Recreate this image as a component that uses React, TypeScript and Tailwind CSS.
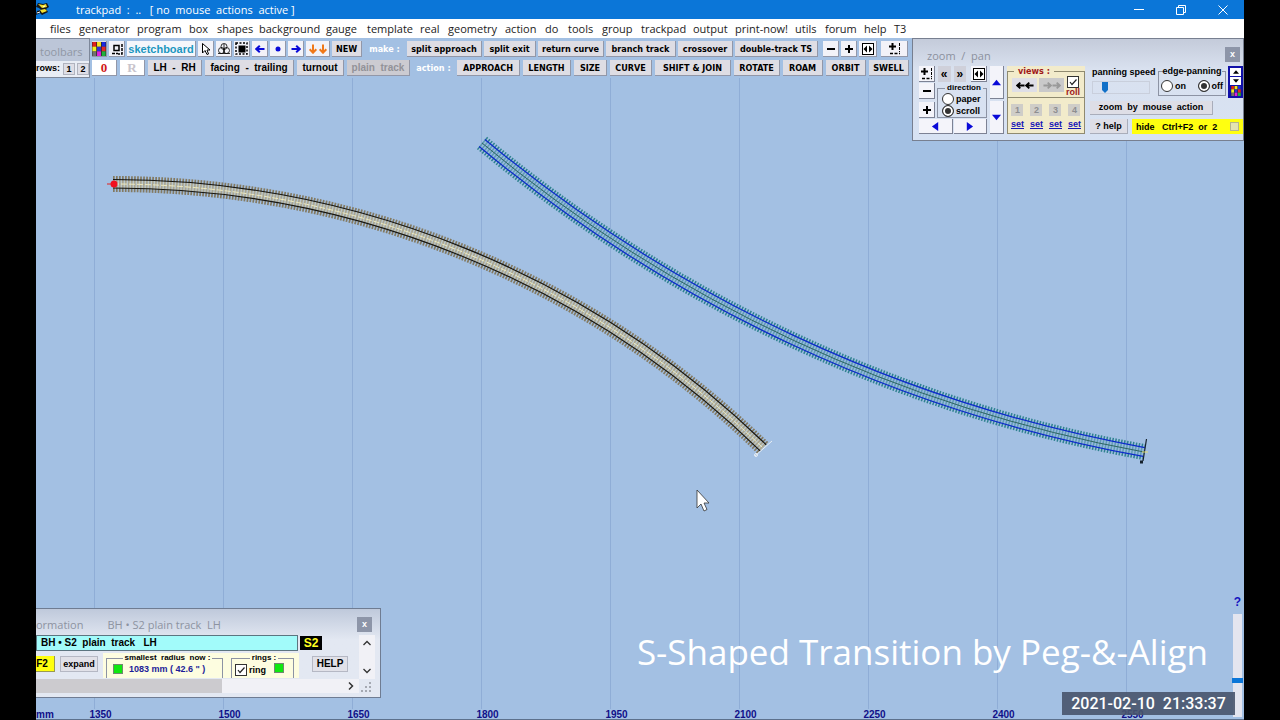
import type { ReactNode } from "react";

const menu: [string, string][] = [
  ["files", "w-[29px]"], ["generator", "w-[58px]"], ["program", "w-[52px]"], ["box", "w-[28px]"],
  ["shapes", "w-[42px]"], ["background", "w-[67px]"], ["gauge", "w-[41px]"], ["template", "w-[53px]"],
  ["real", "w-[28px]"], ["geometry", "w-[57px]"], ["action", "w-[40px]"], ["do", "w-[23px]"],
  ["tools", "w-[34px]"], ["group", "w-[39px]"], ["trackpad", "w-[52px]"], ["output", "w-[42px]"],
  ["print-now!", "w-[60px]"], ["utils", "w-[30px]"], ["forum", "w-[39px]"], ["help", "w-[30px]"], ["T3", "w-5"],
];

const makeButtons: [string, string][] = [
  ["split approach", "w-[75px]"], ["split exit", "w-[52px]"], ["return curve", "w-[66px]"],
  ["branch track", "w-[70px]"], ["crossover", "w-[55px]"], ["double-track TS", "w-[83px]"],
];

const actionButtons: [string, string][] = [
  ["APPROACH", "w-[63px]"], ["LENGTH", "w-[48px]"], ["SIZE", "w-[33px]"], ["CURVE", "w-[42px]"],
  ["SHIFT & JOIN", "w-[76px]"], ["ROTATE", "w-[46px]"], ["ROAM", "w-10"], ["ORBIT", "w-10"], ["SWELL", "w-10"],
];

const rulerMarks = [1350, 1500, 1650, 1800, 1950, 2100, 2250, 2400, 2550];

const SANS = "font-['Open_Sans','Noto_Sans',sans-serif]";
const ARIAL = "font-['Liberation_Sans',sans-serif]";
const VERDANA = "font-['DejaVu_Sans_Condensed','DejaVu_Sans',sans-serif]";

const tones = {
  grey: "bg-[#dedde4] text-black",
  light: "bg-[#f2f2f8] text-black",
  sky: "bg-[#f4f6fb] text-[#1c96bf]",
  red: "bg-white text-[#d01818]",
  faint: "bg-white text-[#c8c4cc]",
  off: "bg-[#cccbd1] text-[#929298]",
};

function Tool({ w, children, label, tone = "grey", className = "" }: { w: string; children: ReactNode; label?: string; tone?: keyof typeof tones; className?: string }) {
  return (
    <button
      type="button"
      aria-label={label}
      className={`flex h-4 shrink-0 items-center justify-center whitespace-nowrap border-r border-b border-[#9297a8] font-bold ${tones[tone]} ${w} ${className}`}
    >
      {children}
    </button>
  );
}

function Arrow({ dir, color = "#0a0ad8", size = 10 }: { dir: "left" | "right" | "down"; color?: string; size?: number }) {
  const turn = { left: 180, right: 0, down: 90 }[dir];
  return (
    <svg width={size} height={size} viewBox="0 0 10 10">
      <path transform={`rotate(${turn} 5 5)`} d="M0.5 5H8.5M5.2 1.7 8.7 5 5.2 8.3" fill="none" stroke={color} strokeWidth="2" />
    </svg>
  );
}

function Triangle({ d, color = "#0a0ad8", size = 9 }: { d: string; color?: string; size?: number }) {
  return (
    <svg width={size} height={size} viewBox="0 0 10 10">
      <path d={d} fill={color} />
    </svg>
  );
}

function SignIcon({ plus }: { plus?: boolean }) {
  return (
    <svg width="10" height="10" viewBox="0 0 10 10" stroke="#000" strokeWidth="2">
      <path d={plus ? "M1 5H9M5 1V9" : "M1 5H9"} />
    </svg>
  );
}

function Palette({ size = 14 }: { size?: number }) {
  const fills = ["#e02020", "#f5e420", "#1a2ae0", "#f0f020", "#3030d0", "#e02828", "#707070", "#e020e0", "#20b040"];
  return (
    <svg width={size} height={size} viewBox="0 0 15 15">
      <rect width="15" height="15" fill="#222" />
      {fills.map((f, i) => (
        <rect key={i} x={(i % 3) * 5 + 0.4} y={Math.floor(i / 3) * 5} width="4.2" height={i > 5 ? 5 : 5.2} fill={f} />
      ))}
    </svg>
  );
}

function FitIcon() {
  return (
    <svg width="12" height="12" viewBox="0 0 12 12">
      <rect x="0.5" y="0.5" width="11" height="11" fill="#fff" stroke="#000" />
      <path d="M5 2.5V9.500L1.500 6ZM7 2.500V9.500L10.500 6Z" />
    </svg>
  );
}

function PlusBox() {
  return (
    <svg width="13" height="13" viewBox="0 0 13 13" fill="none" stroke="#000">
      <path d="M1 4.5H8M4.5 1V8" strokeWidth="2" />
      <path d="M2 11.500H12" strokeWidth="1.5" strokeDasharray="3 1.5" />
      <path d="M11.500 1V10" strokeWidth="1" strokeDasharray="3 1" />
    </svg>
  );
}

type Arc = { x1: number; y1: number; x2: number; y2: number; r: number; bend: 1 | -1 };

function arcPath({ x1, y1, x2, y2, r, bend }: Arc, offset: number) {
  const dx = x2 - x1;
  const dy = y2 - y1;
  const chord = Math.hypot(dx, dy);
  const h = Math.sqrt(r * r - (chord * chord) / 4);
  const cx = (x1 + x2) / 2 - (bend * dy * h) / chord;
  const cy = (y1 + y2) / 2 + (bend * dx * h) / chord;
  const k = (r + offset) / r;
  const p = (x: number, y: number) => `${cx + (x - cx) * k} ${cy + (y - cy) * k}`;
  return `M${p(x1, y1)}A${r + offset} ${r + offset} 0 0 ${bend === 1 ? 1 : 0} ${p(x2, y2)}`;
}

const plainTrack: Arc = { x1: 77, y1: 106, x2: 727, y2: 370, r: 932, bend: 1 };
const shapeTrack: Arc = { x1: 446, y1: 65, x2: 1108, y2: 374, r: 1440, bend: -1 };

function Trackpad() {
  return (
    <svg className="absolute inset-0 h-full w-full" fill="none">
      {rulerMarks.map((m, i) => (
        <path key={m} d={`M${58.5 + i * 129} 0V631`} stroke="#8fadd6" />
      ))}
      <g>
        <path d={arcPath(plainTrack, 0)} stroke="#837a62" strokeWidth="16" strokeDasharray="1.7 1.3" />
        <path d={arcPath(plainTrack, 0)} stroke="#d2cfba" strokeOpacity="0.5" strokeWidth="8" />
        <path d={arcPath(plainTrack, 4.500)} stroke="#151512" strokeWidth="1.2" />
        <path d={arcPath(plainTrack, -4)} stroke="#151512" strokeWidth="1.2" />
        <path d={arcPath(plainTrack, 0)} stroke="#efebc0" strokeDasharray="6 2" />
        <path d="M71 106H78" stroke="#e02020" />
        <circle cx="78" cy="106" r="3.5" fill="#f01020" />
        <path d="M736 363 719 378" stroke="#e8eef4" />
        <circle cx="720" cy="377" r="1.5" stroke="#e8eef4" />
      </g>
      <g>
        <path d={arcPath(shapeTrack, 0)} stroke="#2f8290" strokeWidth="16" strokeDasharray="1.5 1.5" />
        <path d={arcPath(shapeTrack, 0)} stroke="#8fb6da" strokeOpacity="0.5" strokeWidth="9" />
        <path d={arcPath(shapeTrack, 4.500)} stroke="#0c28cc" strokeWidth="1.2" />
        <path d={arcPath(shapeTrack, -4.500)} stroke="#0c28cc" strokeWidth="1.2" />
        <path d={arcPath(shapeTrack, 0)} stroke="#2e6460" />
        <path d="M1110.500 361 1107 383" stroke="#15202c" strokeWidth="1.2" />
        <rect x="1104.500" y="383" width="2" height="2" stroke="#15202c" />
        <path d="M1106 374H1112" stroke="#e8e070" />
      </g>
      <path d="M661 412V430L665 426 668 433 671 431.500 668 425H673Z" fill="#fff" stroke="#333" strokeWidth="0.8" />
    </svg>
  );
}

function Group({ title, className = "", legend = "", children }: { title: string; className?: string; legend?: string; children: ReactNode }) {
  return (
    <fieldset className={`min-w-0 border border-[#8c93a4] ${className}`}>
      <legend className={`mx-auto leading-[10px] font-bold ${legend}`}>{title}</legend>
      {children}
    </fieldset>
  );
}

function Radio({ name, label, checked }: { name: string; label: string; checked?: boolean }) {
  return (
    <label className="flex h-3 items-center gap-0.5 text-[9px] leading-3 font-bold">
      <input
        type="radio"
        name={name}
        defaultChecked={checked}
        className="size-3 shrink-0 appearance-none rounded-full border border-[#333] bg-white checked:bg-[#333] checked:ring-2 checked:ring-white checked:ring-inset"
      />
      {label}
    </label>
  );
}

function Tick({ label, stacked }: { label: string; stacked?: boolean }) {
  return (
    <label className={`flex items-center text-[9px] font-bold ${stacked ? "flex-col leading-[9px] text-[#a01818]" : "gap-0.5 leading-3"}`}>
      <span className="relative size-3">
        <input type="checkbox" defaultChecked className="peer block size-3 appearance-none border border-[#333] bg-white" />
        <svg className="pointer-events-none absolute inset-0 hidden peer-checked:block" width="12" height="12" fill="none" stroke="#222">
          <path d="M3 6 5 8.500 9.500 3.500" strokeWidth="1.2" />
        </svg>
      </span>
      {label}
    </label>
  );
}

function CloseBox() {
  return (
    <button type="button" aria-label="close" className={`flex size-[15px] shrink-0 items-center justify-center bg-[#8d95a8] text-[9px] leading-none font-bold text-white ${ARIAL}`}>
      x
    </button>
  );
}

const raised = "flex items-center justify-center border-r border-b border-[#7d8294] bg-[#f4f4fa]";

function ZoomPanel() {
  return (
    <section className={`absolute top-0 right-0 z-10 w-[332px] border border-[#777f90] bg-linear-to-b from-[#c4cbda] via-[#d9e1ef] via-30% to-[#d7e2f3] pb-1.5 pl-1.5 font-bold ${ARIAL}`}>
      <header className={`flex h-[27px] items-start justify-between pt-2 pr-[3px] pl-2 text-[11px] leading-[18px] font-normal text-[#8c919e] ${SANS}`}>
        <h2 className="whitespace-pre">zoom  /  pan</h2>
        <CloseBox />
      </header>
      <div className="flex h-[68px] items-stretch">
        <div className="flex w-[68px] flex-col gap-px">
          <div className="flex h-4 gap-[3px]">
            <button type="button" aria-label="zoom area" className={`${raised} w-4`}><PlusBox /></button>
            <button type="button" className="w-[13px] bg-[#cfd0da] text-[12px] leading-none">«</button>
            <button type="button" className="w-[13px] bg-[#cfd0da] text-[12px] leading-none">»</button>
            <button type="button" aria-label="zoom fit" className={`${raised} ml-0.5 w-4`}><FitIcon /></button>
          </div>
          <div className="flex h-[35px] gap-0.5">
            <div className="flex w-4 shrink-0 flex-col gap-[3px]">
              <button type="button" aria-label="zoom out" className={`${raised} h-4`}><SignIcon /></button>
              <button type="button" aria-label="zoom in" className={`${raised} h-4`}><SignIcon plus /></button>
            </div>
            <Group title="direction" className="flex-1 pl-1" legend="px-0.5 text-[8px]">
              <Radio name="direction" label="paper" />
              <Radio name="direction" label="scroll" checked />
            </Group>
          </div>
          <div className="flex flex-1 gap-px">
            <button type="button" aria-label="pan left" className={`${raised} flex-1`}><Triangle d="M8 0V10L1 5Z" /></button>
            <button type="button" aria-label="pan right" className={`${raised} flex-1`}><Triangle d="M2 0V10L9 5Z" /></button>
          </div>
        </div>
        <div className="ml-[3px] flex w-[14px] flex-col gap-0.5">
          <button type="button" aria-label="pan up" className={`${raised} flex-1`}><Triangle d="M0 8H10L5 2Z" /></button>
          <button type="button" aria-label="pan down" className={`${raised} flex-1`}><Triangle d="M0 2H10L5 8Z" /></button>
        </div>
        <div className="ml-[3px] flex w-[78px] flex-col bg-[#f2ebcb]">
          <fieldset className="h-8 border border-[#8f8a70] px-1">
            <legend className={`ml-0.5 px-1 text-[9px] leading-[10px] text-[#a01818] ${VERDANA}`}>views :</legend>
            <div className="flex items-start gap-0.5">
              <button type="button" aria-label="previous view" className="mt-0.5 flex h-3.5 w-[25px] items-center justify-center bg-[#dedee6]"><Arrow dir="left" color="#000" size={9} /><Arrow dir="left" color="#000" size={9} /></button>
              <button type="button" aria-label="next view" className="mt-0.5 flex h-3.5 w-[25px] items-center justify-center bg-[#c9c9ca]"><Arrow dir="right" color="#999" size={9} /><Arrow dir="right" color="#999" size={9} /></button>
              <Tick label="roll" stacked />
            </div>
          </fieldset>
          <div className="grid flex-1 grid-cols-4 justify-items-center border border-t-0 border-[#8f8a70] pt-1.5 text-[9px] leading-3">
            {[1, 2, 3, 4].map((n) => (
              <div key={n} className="flex flex-col items-center gap-0.5">
                <button type="button" className="h-3 w-3 bg-[#cfcdc8] text-[#8e8e90]">{n}</button>
                <a href="#views" className="text-[#1616b8] underline">set</a>
              </div>
            ))}
          </div>
        </div>
        <div className="ml-[5px] flex min-w-0 flex-1 flex-col justify-between">
          <div className="flex justify-between">
            <label className="flex w-[63px] flex-col pt-0.5 pl-0.5 text-[9px] leading-3 whitespace-nowrap">
              <span className="leading-[9px]">panning speed</span>
              <span className="relative mt-1 h-[13px] w-[58px] border border-[#c9cfdc]">
                <input type="range" defaultValue={20} className="absolute inset-0 w-full opacity-0" />
                <svg width="56" height="13"><path d="M9 0H15V8L12 11 9 8Z" fill="#1070c8" /></svg>
              </span>
            </label>
            <Group title="edge-panning" className="mr-0.5 h-[30px] w-[68px] shrink-0 px-0.5" legend="whitespace-nowrap text-[9px]">
              <div className="flex justify-between pt-1">
                <Radio name="edge" label="on" />
                <Radio name="edge" label="off" checked />
              </div>
            </Group>
          </div>
          <button type="button" className="h-[14px] w-[123px] border-r border-b border-[#a9adba] bg-[#dedee6] text-[9px] leading-3 whitespace-pre">zoom  by  mouse  action</button>
          <div className="flex h-[15px] gap-1">
            <button type="button" className="w-[38px] border-r border-b border-[#a9adba] bg-[#dedee6] text-[9px] leading-3">? help</button>
            <button type="button" className="flex flex-1 items-center bg-[#ffff10] pl-1 text-[9px] leading-3 whitespace-pre">hide   Ctrl+F2  or  2</button>
          </div>
        </div>
        <div className="flex w-[15px] flex-col justify-between">
          <div className="flex h-8 flex-col items-center gap-px border-2 border-[#1010a8] bg-[#1010a8]">
            <button type="button" aria-label="more" className="flex h-2 w-full items-center justify-center bg-white"><Triangle d="M0 8H10L5 2Z" color="#000" size={6} /></button>
            <button type="button" aria-label="less" className="flex h-2 w-full items-center justify-center bg-white"><Triangle d="M0 2H10L5 8Z" color="#000" size={6} /></button>
            <Palette size={10} />
          </div>
          <div className="flex h-[15px] items-center bg-[#ffff10] pl-0.5"><span className="size-[9px] border border-[#b5b58a] bg-[#e4e4b0]" /></div>
        </div>
      </div>
    </section>
  );
}

function InfoPanel() {
  return (
    <section className={`absolute bottom-[21px] left-0 z-10 w-[345px] border border-l-0 border-[#6f7c92] bg-linear-to-b from-[#bfc9db] to-[#e3e8f2] to-35% pb-1 font-bold ${ARIAL}`}>
      <header className={`flex h-[26px] items-start justify-between pt-2 pr-2 text-[11px] leading-4 font-normal text-[#8d93a1] ${SANS}`}>
        <h2 className="flex gap-6 whitespace-pre"><span>ormation</span><span>BH • S2 plain track  LH</span></h2>
        <CloseBox />
      </header>
      <div className="flex">
        <div className="w-[323px]">
          <div className="flex h-4 items-center gap-0.5">
            <p className="h-4 w-[262px] border border-[#5c7580] bg-[#a2fbfa] pl-1 text-[10px] leading-[14px] whitespace-pre">BH • S2  plain  track   LH</p>
            <strong className="h-[14px] w-[22px] bg-black text-center text-[12px] leading-[14px] text-[#ffff20]">S2</strong>
          </div>
          <div className="flex h-[27px] items-end">
            <button type="button" className="mb-1.5 h-4 w-[19px] border-r border-b border-[#9a9a50] bg-[#ffff10] pr-1.5 text-[10px] leading-3">F2</button>
            <button type="button" className="mb-1.5 ml-[5px] h-4 w-[38px] border border-[#b5b8c4] bg-[#e1e1e8] text-[9px] leading-3">expand</button>
            <div className="ml-[5px] flex h-[25px] w-[196px] gap-2 bg-[#fdfde0] pl-[3px]">
              <Group title="smallest  radius  now :" className="w-[117px] border-b-0 pl-1.5" legend="px-0.5 whitespace-pre text-[8px]">
                <div className="flex items-center gap-1.5 text-[9px] leading-3 whitespace-pre text-[#1c1c98]">
                  <span className="size-[10px] border border-[#708870] bg-[#10e810]" />
                  1083 mm ( 42.6 " )
                </div>
              </Group>
              <Group title="rings :" className="w-[63px] border-b-0 pl-[3px]" legend="px-0.5 text-[8px]">
                <div className="flex items-center gap-2">
                  <Tick label="ring" />
                  <span className="mb-1 size-[10px] border border-[#708870] bg-[#10e810]" />
                </div>
              </Group>
            </div>
            <button type="button" className="mb-1.5 ml-[13px] h-4 w-9 border border-[#b5b8c4] bg-[#e1e1e8] text-[10px] leading-3">HELP</button>
          </div>
          <div className="mt-px flex h-[14px] items-center justify-between bg-[#f1f1f6]">
            <span className="h-full w-[186px] bg-[#cccbcf]" />
            <svg className="mr-1" width="8" height="10" fill="none" stroke="#333" strokeWidth="1.5"><path d="M2 1.500 5.500 5 2 8.500" /></svg>
          </div>
        </div>
        <div className="flex w-4 flex-col">
          <div className="flex flex-1 flex-col items-center justify-between bg-[#f1f1f6] py-1">
            <svg width="10" height="8" fill="none" stroke="#333" strokeWidth="1.3"><path d="M1.500 6 5 2.500 8.500 6" /></svg>
            <svg width="10" height="8" fill="none" stroke="#333" strokeWidth="1.3"><path d="M1.500 2 5 5.500 8.500 2" /></svg>
          </div>
          <svg width="14" height="14" fill="#a5a9b2">
            <path d="M10 3h2v2h-2zM10 7h2v2h-2zM10 11h2v2h-2zM6 7h2v2H6zM6 11h2v2H6zM2 11h2v2H2z" />
          </svg>
        </div>
      </div>
    </section>
  );
}

export default function App() {
  return (
    <div className="flex h-screen bg-black px-9">
      <main className="relative flex min-w-0 flex-1 flex-col overflow-hidden border-b border-[#5c708c] bg-[#a3c0e3]">
        <header className={`flex h-[19px] shrink-0 items-center bg-[#0b76d8] text-white ${SANS}`}>
          <svg width="15" height="17" viewBox="0 0 15 17">
            <path d="M2 2 7 3 11 2 13 6 10 8 12 11 6 14 4 12 0 14 1 10 5 9 3 7 0 6Z" fill="#161616" />
            <path d="M2 3 7 4 10 3 11 6 6 7ZM4 9 9 8 11 10 6 12Z" fill="#f2e030" />
            <path d="M1 12 4 11M7 6 9 5" stroke="#fff" />
          </svg>
          <h1 className="ml-[25px] flex-1 text-[11px] leading-4 whitespace-pre">trackpad  :  ..   [ no  mouse  actions  active ]</h1>
          <div className="flex gap-8 pr-4">
            <button type="button" aria-label="minimise"><svg width="10" height="10" stroke="#fff"><path d="M0 4.500H10" /></svg></button>
            <button type="button" aria-label="restore"><svg width="10" height="10" fill="none" stroke="#fff"><path d="M0.500 2.500H7.500V9.500H0.500ZM2.500 2V0.500H9.500V7.500H8" /></svg></button>
            <button type="button" aria-label="close"><svg width="10" height="10" stroke="#fff"><path d="M0.500 0.500 9.500 9.500M9.500 0.500 0.500 9.500" /></svg></button>
          </div>
        </header>
        <nav className={`flex h-[19px] shrink-0 items-center bg-white pl-[14px] text-[11px] leading-4 text-[#222] ${SANS}`}>
          {menu.map(([name, w]) => (
            <button type="button" key={name} className={`shrink-0 text-left whitespace-nowrap ${w}`}>{name}</button>
          ))}
        </nav>

        <div className="relative flex min-h-0 flex-1 flex-col">
          <div className="flex h-10 shrink-0">
            <section className="w-[54px] shrink-0 border border-l-0 border-[#7d8799] bg-[#e9edf5]">
              <h2 className={`h-[22px] bg-[#bcc6d8] pt-1 pl-1 text-[11px] leading-[18px] text-[#9097a5] ${SANS}`}>toolbars</h2>
              <div className={`flex h-4 items-center gap-0.5 text-[9px] font-bold ${ARIAL}`}>
                <span className="w-[25px]">rows:</span>
                <button type="button" className="h-3 w-3 border border-[#b0b3be] bg-[#dedee6] leading-[10px]">1</button>
                <button type="button" className="h-3 w-3 border border-[#b0b3be] bg-[#dedee6] leading-[10px]">2</button>
              </div>
            </section>
            <div className={`flex flex-col gap-[3px] pt-[3px] pl-0.5 text-[9px] leading-3 ${VERDANA}`}>
              <div className="flex gap-0.5">
                <Tool w="w-[15px]" label="colours"><Palette /></Tool>
                <Tool w="w-[16px]" label="copy area" tone="light">
                  <svg width="12" height="12" fill="none" stroke="#000"><path d="M3 2.500H8V7.500H3Z" strokeWidth="1.5" /><path d="M1 10.500H7M11 1V11H7" strokeWidth="1.5" strokeDasharray="3 1" /></svg>
                </Tool>
                <Tool w="w-[69px]" tone="sky" className={`text-[11px] ${ARIAL}`}>sketchboard</Tool>
                <Tool w="w-4" label="pointer" tone="light">
                  <svg width="12" height="14" fill="#fff" stroke="#000"><path d="M2.500 1.500V11L5 8.500 7 12.500 8.500 12 7 8H10Z" /></svg>
                </Tool>
                <Tool w="w-4" label="shapes" tone="light">
                  <svg width="14" height="14" fill="none" stroke="#000" strokeWidth="0.8"><circle cx="7" cy="4.500" r="3" /><circle cx="4.500" cy="8.500" r="3" /><circle cx="9.500" cy="8.500" r="3" /><path d="M1 11.500H13M7 2V11" /></svg>
                </Tool>
                <Tool w="w-4" label="group" tone="light">
                  <svg width="14" height="14" fill="none" stroke="#000"><rect x="1" y="1" width="11" height="11" strokeWidth="1.5" strokeDasharray="2 1.500" /><rect x="4" y="4" width="6" height="6" fill="#000" /></svg>
                </Tool>
                <Tool w="w-4" label="previous" tone="light"><Arrow dir="left" /></Tool>
                <Tool w="w-4" label="current" tone="light"><svg width="6" height="6"><circle cx="3" cy="3" r="2.500" fill="#0a0ad8" /></svg></Tool>
                <Tool w="w-4" label="next" tone="light"><Arrow dir="right" /></Tool>
                <Tool w="w-6" label="store" tone="light"><Arrow dir="down" color="#f07818" /><Arrow dir="down" color="#f07818" /></Tool>
                <Tool w="w-[30px]">NEW</Tool>
                <span className="w-[41px] py-0.5 text-center font-bold whitespace-nowrap text-white">make :</span>
                {makeButtons.map(([name, w]) => <Tool key={name} w={w}>{name}</Tool>)}
                <Tool w="w-4" label="zoom out" tone="light" className="ml-[3px]"><SignIcon /></Tool>
                <Tool w="w-4" label="zoom in" tone="light"><SignIcon plus /></Tool>
                <Tool w="w-[18px]" label="fit" tone="light"><FitIcon /></Tool>
                <Tool w="w-[27px]" label="zoom area" tone="light" className="ml-0.5"><PlusBox /></Tool>
              </div>
              <div className="flex gap-[3px]">
                <Tool w="w-[25px]" tone="red" className="font-['Liberation_Serif',serif] text-[13px]">0</Tool>
                <Tool w="w-[25px]" tone="faint" className="font-['Liberation_Serif',serif] text-[13px]">R</Tool>
                <Tool w="w-[54px]" className={`text-[10px] whitespace-pre ${ARIAL}`}>LH  -  RH</Tool>
                <Tool w="w-[89px]" className={`text-[10px] whitespace-pre ${ARIAL}`}>facing  -  trailing</Tool>
                <Tool w="w-[47px]" className={`text-[10px] ${ARIAL}`}>turnout</Tool>
                <Tool w="w-[63px]" tone="off" className={`text-[10px] whitespace-pre ${ARIAL}`}>plain  track</Tool>
                <span className="w-[41px] py-0.5 text-center font-bold whitespace-nowrap text-white">action :</span>
                {actionButtons.map(([name, w]) => <Tool key={name} w={w}>{name}</Tool>)}
              </div>
            </div>
          </div>

          <ZoomPanel />

          <div className="relative min-h-0 flex-1">
            <Trackpad />
            <InfoPanel />
            <p className={`absolute right-9 bottom-10 text-[35px] leading-[54px] whitespace-nowrap text-white ${SANS}`}>S-Shaped Transition by Peg-&amp;-Align</p>
            <div className={`absolute right-0.5 bottom-0.5 flex flex-col items-center text-[12px] font-bold text-[#1414c0] ${ARIAL}`}>
              <button type="button" className="h-4 leading-4">?</button>
              <div className="mt-1 flex h-[103px] w-[9px] flex-col items-center bg-[#e4e5ef] pt-[64px]">
                <span className="h-[5px] w-[11px] bg-[#0b76d8]" />
              </div>
            </div>
            <footer className={`absolute inset-x-0 bottom-0 flex h-2 text-[10px] leading-2 font-bold text-[#101088] ${ARIAL}`}>
              <span className="absolute left-0">mm</span>
              {rulerMarks.map((m) => <span key={m} className="w-[129px] shrink-0 text-center">{m}</span>)}
            </footer>
            <time className="absolute right-[9px] bottom-1 h-[23px] w-[173px] bg-[#48546b]/90 text-center font-['Roboto',sans-serif] text-[16px] leading-[23px] font-medium whitespace-pre text-white">2021-02-10  21:33:37</time>
          </div>
        </div>
      </main>
    </div>
  );
}
